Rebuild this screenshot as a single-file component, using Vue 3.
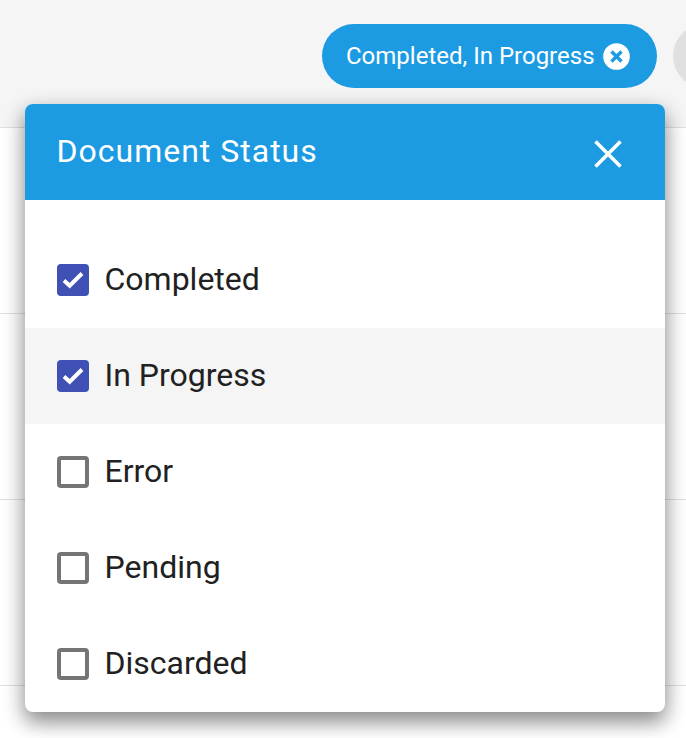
<script setup>
const options = [
  { label: 'Completed', checked: true },
  { label: 'In Progress', checked: true, hover: true },
  { label: 'Error', checked: false },
  { label: 'Pending', checked: false },
  { label: 'Discarded', checked: false }
]
</script>

<template>
  <div class="page">
    <div class="toolbar">
      <div class="pill">
        <span class="pill-text">Completed, In Progress</span>
        <svg class="pill-x" width="27" height="27" viewBox="0 0 27 27">
          <circle cx="13.5" cy="13.5" r="13.3" fill="#fff" />
          <path d="M8.5 8.5l10 10M18.5 8.5l-10 10" stroke="#1c9be3" stroke-width="3.4" fill="none" />
        </svg>
      </div>
      <div class="pill-grey"></div>
    </div>
    <div class="rows">
      <div class="row"></div>
      <div class="row"></div>
      <div class="row"></div>
    </div>

    <div class="popover">
      <div class="pop-head">
        <span class="pop-title">Document Status</span>
        <svg class="close" width="30" height="30" viewBox="0 0 30 30">
          <path d="M2.5 2.5l25 25M27.5 2.5l-25 25" stroke="#fff" stroke-width="3.6" fill="none" />
        </svg>
      </div>
      <div class="list">
        <div v-for="o in options" :key="o.label" class="item" :class="{ hover: o.hover }">
          <span class="box" :class="{ on: o.checked }">
            <svg v-if="o.checked" width="32" height="32" viewBox="0 0 32 32">
              <path d="M7 16.5l5.7 5.2L25 9.5" stroke="#fff" stroke-width="4" fill="none" />
            </svg>
          </span>
          <span class="label">{{ o.label }}</span>
        </div>
      </div>
    </div>
  </div>
</template>

<style scoped>
.page {
  position: relative;
  width: 686px;
  height: 738px;
  overflow: hidden;
  background: #fff;
  font-family: Roboto, sans-serif;
}
.toolbar {
  height: 127px;
  background: #f5f5f5;
  border-bottom: 1px solid #e0e0e0;
  display: flex;
  gap: 16px;
  padding-left: 322px;
  align-items: flex-start;
}
.pill {
  margin-top: 24px;
  flex: none;
  width: 335px;
  height: 64px;
  box-sizing: border-box;
  border-radius: 32px;
  background: #1c9be3;
  color: #fff;
  display: flex;
  align-items: center;
  padding-left: 24px;
  gap: 8px;
}
.pill-text {
  font-size: 24px;
  white-space: nowrap;
}
.pill-x {
  flex: none;
}
.pill-grey {
  margin-top: 24px;
  flex: none;
  width: 64px;
  height: 64px;
  border-radius: 50%;
  background: #e0e0e0;
}
.row {
  height: 185px;
  border-bottom: 1px solid #e0e0e0;
}
.popover {
  position: absolute;
  left: 25px;
  top: 104px;
  width: 640px;
  height: 608px;
  border-radius: 8px;
  overflow: hidden;
  background: #fff;
  box-shadow: 0 10px 20px rgba(0, 0, 0, 0.38), 0 6px 24px rgba(0, 0, 0, 0.15);
}
.pop-head {
  height: 96px;
  background: #1c9be3;
  color: #fff;
  display: flex;
  align-items: center;
  justify-content: space-between;
  padding: 0 42px 0 31.5px;
}
.pop-title {
  font-size: 32px;
  letter-spacing: 1px;
  padding-bottom: 2px;
}
.close {
  flex: none;
  margin-top: 4px;
}
.list {
  padding-top: 32px;
}
.item {
  height: 96px;
  display: flex;
  align-items: center;
  padding-left: 32px;
  gap: 15.5px;
}
.item.hover {
  background: #f5f5f5;
}
.box {
  width: 32px;
  height: 32px;
  box-sizing: border-box;
  border: 4px solid #757575;
  border-radius: 4px;
  flex: none;
}
.box.on {
  border: 0;
  background: #3f51b5;
}
.box svg {
  display: block;
}
.label {
  font-size: 32px;
  color: #212121;
  padding-bottom: 2px;
}
</style>
